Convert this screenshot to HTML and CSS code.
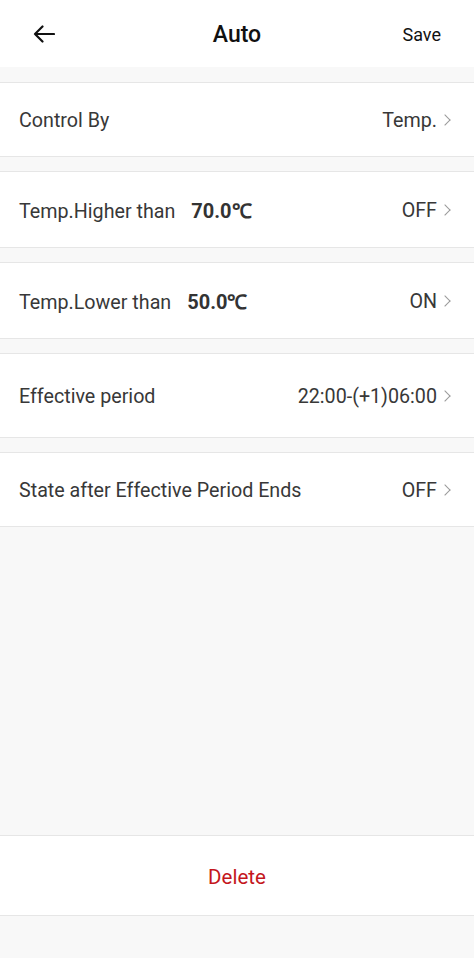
FILE: index.html
```html
<!DOCTYPE html>
<html>
<head>
<meta charset="utf-8">
<link rel="stylesheet" href="styles.css">
</head>
<body>
<div class="page">
  <header class="topbar">
    <span class="back">
      <svg width="22" height="18" viewBox="0 0 22 18"><path d="M2 9H21M9.5 1.5L2 9l7.5 7.5" fill="none" stroke="#111" stroke-width="2.2" stroke-linecap="round" stroke-linejoin="round"/></svg>
    </span>
    <h1 class="title">Auto</h1>
    <span class="save">Save</span>
  </header>
  <div class="gap first"></div>
  <div class="row r73">
    <span class="label">Control By</span>
    <span class="value">Temp.<i class="chev"></i></span>
  </div>
  <div class="gap"></div>
  <div class="row r75">
    <span class="label">Temp.Higher than<b class="num">70.0℃</b></span>
    <span class="value">OFF<i class="chev"></i></span>
  </div>
  <div class="gap"></div>
  <div class="row r75">
    <span class="label">Temp.Lower than<b class="num">50.0℃</b></span>
    <span class="value">ON<i class="chev"></i></span>
  </div>
  <div class="gap"></div>
  <div class="row r84">
    <span class="label">Effective period</span>
    <span class="value">22:00-(+1)06:00<i class="chev"></i></span>
  </div>
  <div class="gap"></div>
  <div class="row r73">
    <span class="label">State after Effective Period Ends</span>
    <span class="value">OFF<i class="chev"></i></span>
  </div>
  <div class="fill"></div>
  <div class="delete">Delete</div>
  <div class="bottom"></div>
</div>
</body>
</html>
```
FILE: styles.css
```css
* { box-sizing: border-box; }
html, body { margin: 0; padding: 0; }
body {
  font-family: Roboto, "Liberation Sans", sans-serif;
  background: #fff;
  color: #333;
}
.page {
  width: 474px;
  height: 961px;
  display: flex;
  flex-direction: column;
  background: #f8f8f8;
}
.topbar {
  height: 67px;
  background: #fff;
  display: flex;
  align-items: center;
  justify-content: space-between;
  padding: 1px 33px 0 33px;
  position: relative;
}
.back { display: flex; width: 22px; height: 18px; }
.title {
  margin: 0;
  font-size: 23px;
  font-weight: 500;
  color: #111;
  position: absolute;
  left: 0; right: 0;
  text-align: center;
  pointer-events: none;
}
.save { font-size: 18px; color: #111; }
.gap {
  height: 15px;
  background: #f8f8f8;
  border-bottom: 1px solid #e6e6e6;
}
.gap.first { height: 16px; }
.row {
  background: #fff;
  border-bottom: 1px solid #e6e6e6;
  display: flex;
  align-items: center;
  justify-content: space-between;
  padding: 1px 22px 0 19px;
  font-size: 19.7px;
  color: #383838;
}
.r73 { height: 74px; }
.r75 { height: 76px; }
.r84 { height: 84px; }
.label { display: flex; align-items: baseline; }
.num { font-weight: 700; font-size: 20px; margin-left: 16px; color: #333; }
.value { display: flex; align-items: center; }
.chev {
  display: inline-block;
  width: 8px; height: 8px;
  border-top: 1.6px solid #999;
  border-right: 1.6px solid #999;
  transform: rotate(45deg);
  margin-left: 4px;
  margin-right: 3px;
}
.fill { flex: 1; border-bottom: 1px solid #e6e6e6; }
.delete {
  height: 80px;
  background: #fff;
  border-bottom: 1px solid #e6e6e6;
  display: flex;
  align-items: center;
  justify-content: center;
  font-size: 20.5px;
  color: #c4161c;
  padding-top: 2px;
}
.bottom { height: 42px; border-bottom: 3px solid #fff; box-sizing: content-box; }
```
